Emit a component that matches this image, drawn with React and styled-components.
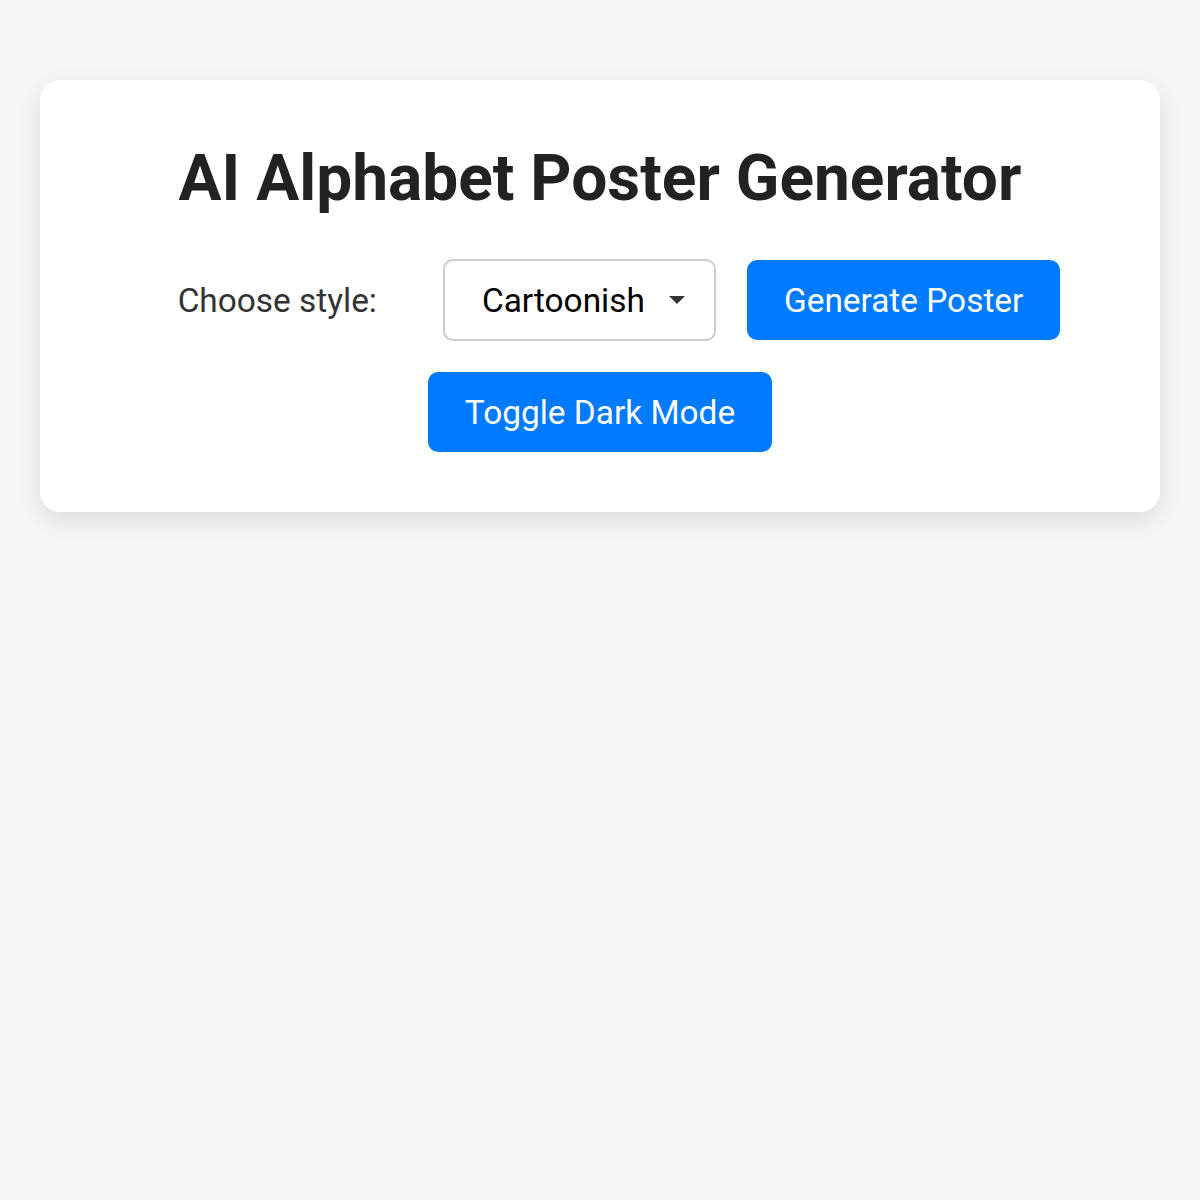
import styled, { createGlobalStyle } from "styled-components";

const GlobalStyle = createGlobalStyle`
  html, body {
    margin: 0;
    padding: 0;
    background: #f5f5f5;
    font-family: Roboto, "Liberation Sans", sans-serif;
  }
`;

const App = () => {
  return (
    <>
      <GlobalStyle />
      <Page>
        <Card>
          <Title>AI Alphabet Poster Generator</Title>
          <Controls>
            <Label htmlFor="style">Choose style:</Label>
            <SelectWrap>
              <Select id="style" defaultValue="cartoonish">
                <option value="cartoonish">Cartoonish</option>
                <option value="realistic">Realistic</option>
                <option value="minimalist">Minimalist</option>
              </Select>
              <Caret />
            </SelectWrap>
            <Button>Generate Poster</Button>
          </Controls>
          <Button>Toggle Dark Mode</Button>
        </Card>
      </Page>
    </>
  );
};

export default App;

const Page = styled.div`
  min-height: 1200px;
  padding: 80px 40px;
  box-sizing: border-box;
`;

const Card = styled.div`
  background: #fff;
  border-radius: 20px;
  box-shadow: 0 8px 24px rgba(0, 0, 0, 0.1);
  padding: 40px 40px 60px;
  display: flex;
  flex-direction: column;
  align-items: center;
`;

const Title = styled.h1`
  margin: 20px 0 42px;
  font-size: 64px;
  line-height: 77px;
  font-weight: 700;
  color: #222;
  text-align: center;
`;

const Controls = styled.div`
  display: flex;
  align-items: center;
  justify-content: center;
  gap: 31px;
  margin-bottom: 31px;
`;

const Label = styled.label`
  font-size: 33.4px;
  color: #333;
  margin-left: 38px;
  margin-right: 35px;
`;

const SelectWrap = styled.div`
  position: relative;
  display: flex;
`;

const Select = styled.select`
  appearance: none;
  width: 273px;
  height: 82px;
  box-sizing: border-box;
  padding: 0 60px 0 37px;
  border: 2px solid #ccc;
  border-radius: 10px;
  background: #fff;
  font-family: Roboto, "Liberation Sans", sans-serif;
  font-size: 33.4px;
  color: #000;
  outline: none;
`;

const Caret = styled.span`
  position: absolute;
  right: 31px;
  top: 37px;
  width: 0;
  height: 0;
  border-left: 8px solid transparent;
  border-right: 8px solid transparent;
  border-top: 8px solid #333;
  pointer-events: none;
`;

const Button = styled.button`
  height: 80px;
  padding: 0 37px;
  border: none;
  border-radius: 10px;
  background: #007bff;
  color: #fff;
  font-family: Roboto, "Liberation Sans", sans-serif;
  font-size: 33.4px;
  cursor: pointer;
`;
